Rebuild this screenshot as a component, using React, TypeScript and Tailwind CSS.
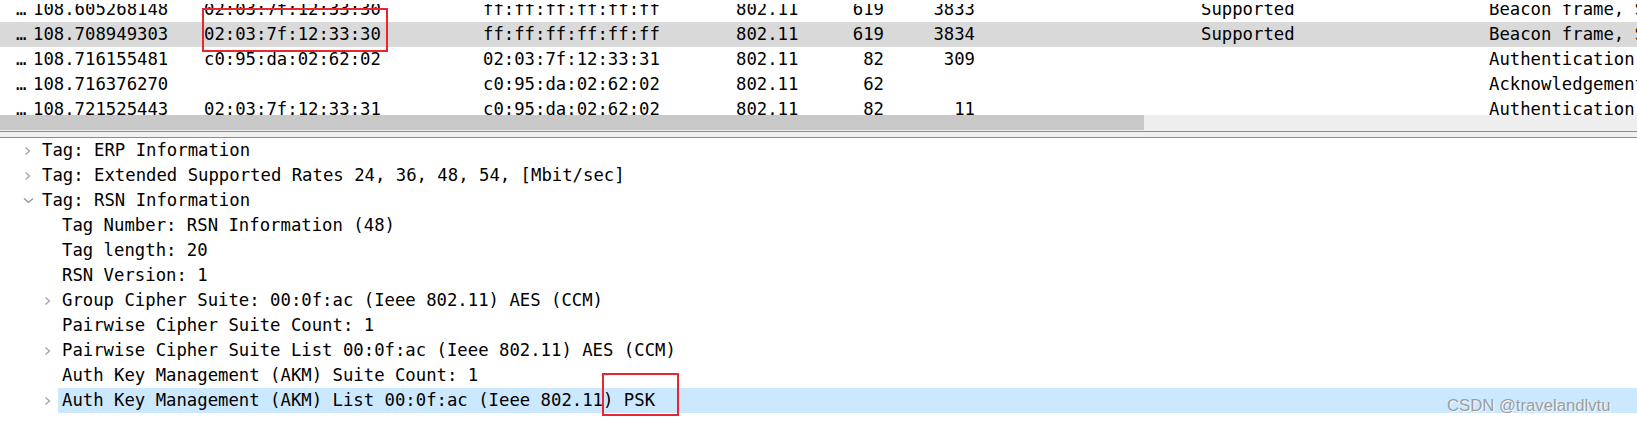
import React from 'react';

interface Packet {
  time: string;
  src: string;
  dst: string;
  proto: string;
  len: string;
  seq: string;
  extra: string;
  info: string;
  selected?: boolean;
}

const packets: Packet[] = [
  { time: '108.605268148', src: '02:03:7f:12:33:30', dst: 'ff:ff:ff:ff:ff:ff', proto: '802.11', len: '619', seq: '3833', extra: 'Supported', info: 'Beacon frame, SN=3833, FN=0, Flags=........' },
  { time: '108.708949303', src: '02:03:7f:12:33:30', dst: 'ff:ff:ff:ff:ff:ff', proto: '802.11', len: '619', seq: '3834', extra: 'Supported', info: 'Beacon frame, SN=3834, FN=0, Flags=........', selected: true },
  { time: '108.716155481', src: 'c0:95:da:02:62:02', dst: '02:03:7f:12:33:31', proto: '802.11', len: '82', seq: '309', extra: '', info: 'Authentication, SEQ: 1, status: Successful' },
  { time: '108.716376270', src: '', dst: 'c0:95:da:02:62:02', proto: '802.11', len: '62', seq: '', extra: '', info: 'Acknowledgement, Flags=........' },
  { time: '108.721525443', src: '02:03:7f:12:33:31', dst: 'c0:95:da:02:62:02', proto: '802.11', len: '82', seq: '11', extra: '', info: 'Authentication, SEQ: 2, status: Successful' },
];

type Arrow = 'right' | 'down' | 'none';

interface TreeItem {
  level: number;
  arrow: Arrow;
  text: string;
  selected?: boolean;
}

const tree: TreeItem[] = [
  { level: 0, arrow: 'right', text: 'Tag: ERP Information' },
  { level: 0, arrow: 'right', text: 'Tag: Extended Supported Rates 24, 36, 48, 54, [Mbit/sec]' },
  { level: 0, arrow: 'down', text: 'Tag: RSN Information' },
  { level: 1, arrow: 'none', text: 'Tag Number: RSN Information (48)' },
  { level: 1, arrow: 'none', text: 'Tag length: 20' },
  { level: 1, arrow: 'none', text: 'RSN Version: 1' },
  { level: 1, arrow: 'right', text: 'Group Cipher Suite: 00:0f:ac (Ieee 802.11) AES (CCM)' },
  { level: 1, arrow: 'none', text: 'Pairwise Cipher Suite Count: 1' },
  { level: 1, arrow: 'right', text: 'Pairwise Cipher Suite List 00:0f:ac (Ieee 802.11) AES (CCM)' },
  { level: 1, arrow: 'none', text: 'Auth Key Management (AKM) Suite Count: 1' },
  { level: 1, arrow: 'right', text: 'Auth Key Management (AKM) List 00:0f:ac (Ieee 802.11) PSK', selected: true },
];

const Chevron = ({ arrow }: { arrow: Arrow }) => {
  if (arrow === 'right') {
    return (
      <svg width="7" height="10" viewBox="0 0 7 10" className="ml-[4px]">
        <path d="M1.5 1.5 L5.5 5 L1.5 8.5" fill="none" stroke="#a3a3a3" strokeWidth="1.3" />
      </svg>
    );
  }
  if (arrow === 'down') {
    return (
      <svg width="11" height="7" viewBox="0 0 11 7" className="ml-[3px]">
        <path d="M1 1.5 L5.5 5.5 L10 1.5" fill="none" stroke="#8f8f8f" strokeWidth="1.3" />
      </svg>
    );
  }
  return null;
};

const PacketRow = ({ p }: { p: Packet }) => (
  <div
    className={`flex h-[25px] shrink-0 items-center whitespace-nowrap leading-[25px] pl-[16px] ${p.selected ? 'bg-[#d9d9d9]' : ''}`}
  >
    <span className="w-[17px]">…</span>
    <span className="w-[171px]">{p.time}</span>
    <span className="w-[279px]">{p.src}</span>
    <span className="w-[253px]">{p.dst}</span>
    <span className="w-[92px]">{p.proto}</span>
    <span className="w-[56px] text-right">{p.len}</span>
    <span className="w-[91px] text-right">{p.seq}</span>
    <span className="w-[226px]" />
    <span className="w-[288px]">{p.extra}</span>
    <span className="flex-1 overflow-hidden">{p.info}</span>
  </div>
);

const App = () => {
  const [first, ...rest] = packets;
  return (
    <div className="relative w-[1637px] h-[424px] overflow-hidden bg-white text-black font-['DejaVu_Sans_Mono',monospace] text-[17.3px]">
      {/* packet list, scrolled so the first row is cut at the top */}
      <div className="h-[115px] overflow-hidden pt-[4px]">
        <div className="flex h-[18px] flex-col justify-end overflow-hidden">
          <PacketRow p={first} />
        </div>
        {rest.map((p, i) => (
          <PacketRow key={i} p={p} />
        ))}
      </div>

      {/* horizontal scrollbar */}
      <div className="flex h-[15px] bg-[#eeeeee]">
        <div className="w-[1144px] bg-[#c8c8c8]" />
      </div>
      <div className="h-px bg-[#f0f0f0]" />
      {/* splitter */}
      <div className="h-[7px] bg-[#f0f0f0] border-t border-b border-[#8b8b93]" />

      {/* packet details */}
      <div>
        {tree.map((t, i) => (
          <div key={i} className="flex h-[25px] items-center whitespace-nowrap leading-[25px]">
            <div className={t.level === 0 ? 'w-[20px]' : 'w-[40px]'} />
            <div className="flex w-[18px] items-center">
              <Chevron arrow={t.arrow} />
            </div>
            <div className={`flex-1 h-full pl-[4px] ${t.selected ? 'bg-[#cce8ff]' : ''}`}>{t.text}</div>
          </div>
        ))}
      </div>

      {/* annotation boxes */}
      <div className="absolute left-[202px] top-[8px] w-[186px] h-[44px] border-2 border-[#e8262f]" />
      <div className="absolute left-[602px] top-[373px] w-[77px] h-[43px] border-2 border-[#e8262f]" />

      {/* watermark */}
      <div className="absolute left-[1447px] top-[396px] leading-[20px] text-[16.7px] font-['Liberation_Sans',sans-serif] text-[#9d9d9d] [text-shadow:1px_1px_1px_rgba(255,255,255,0.9)]">
        CSDN @travelandlvtu
      </div>
    </div>
  );
};

export default App;
